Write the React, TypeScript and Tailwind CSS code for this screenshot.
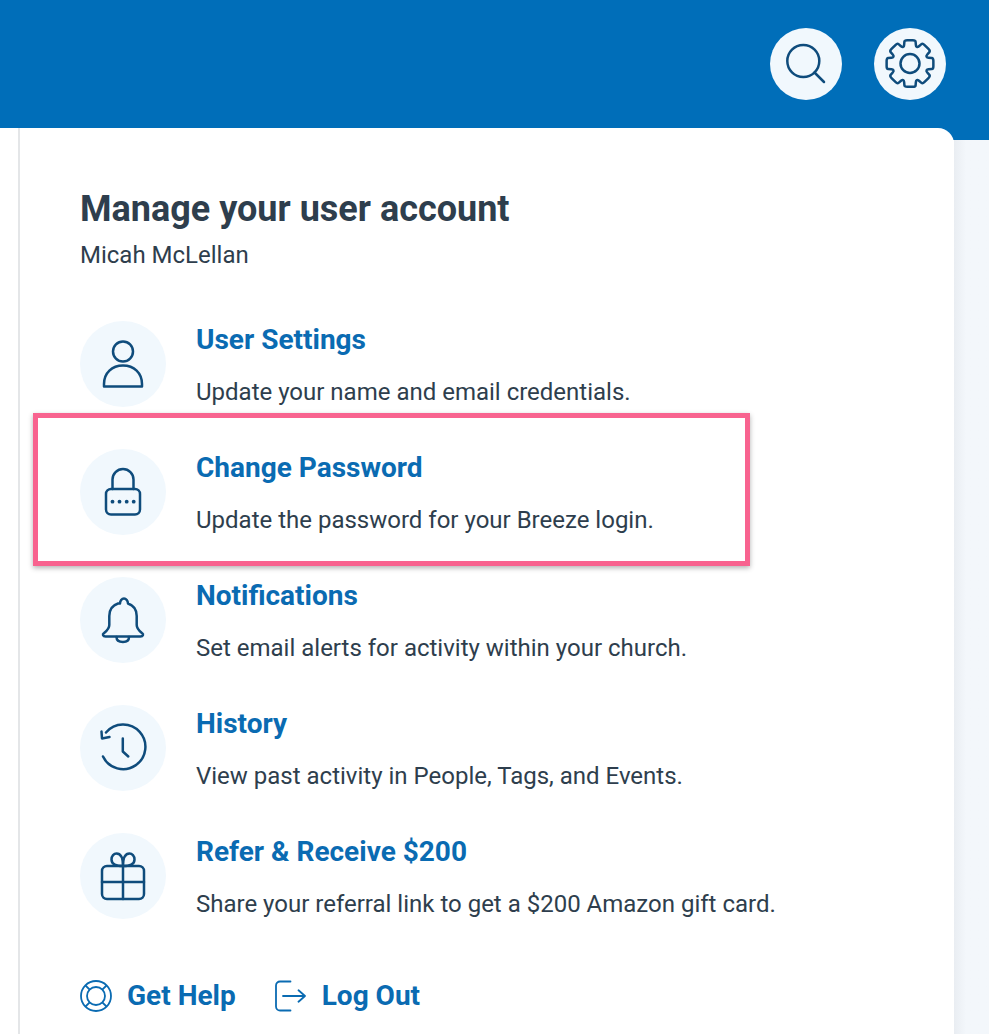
import type { ReactNode } from 'react'

// engrenagem de 8 dentes com cantos arredondados, centro em 36,35.5
function gearPath() {
  const pts: [number, number][] = []
  for (let i = 0; i < 8; i++) {
    const a = (i * Math.PI) / 4 - Math.PI / 2
    const p = (r: number, d: number): [number, number] => [36 + r * Math.cos(a + d), 35.5 + r * Math.sin(a + d)]
    pts.push(p(18, -0.34), p(24, -0.23), p(24, 0.23), p(18, 0.34))
  }
  const lerp = (a: [number, number], b: [number, number], t: number) =>
    `${(a[0] + (b[0] - a[0]) * t).toFixed(2)} ${(a[1] + (b[1] - a[1]) * t).toFixed(2)}`
  let d = ''
  pts.forEach((v, i) => {
    const prev = pts[(i + pts.length - 1) % pts.length]
    const next = pts[(i + 1) % pts.length]
    d += `${i === 0 ? 'M' : 'L'}${lerp(v, prev, 0.25)}Q${v[0].toFixed(2)} ${v[1].toFixed(2)} ${lerp(v, next, 0.25)}`
  })
  return d + 'Z'
}

const filas: { titulo: string; desc: string; icono: ReactNode }[] = [
  {
    titulo: 'User Settings',
    desc: 'Update your name and email credentials.',
    icono: (
      <>
        <circle cx="43" cy="30.500" r="10" />
        <path d="M24 65.500v-2.500C24 52 32 44.500 43 44.500S62 52 62 63v2.500z" />
      </>
    ),
  },
  {
    titulo: 'Change Password',
    desc: 'Update the password for your Breeze login.',
    icono: (
      <>
        <path d="M32.500 40V30.500a10.500 10.500 0 0 1 21 0V40" />
        <rect x="26" y="40" width="34" height="25.500" rx="5" />
        <circle cx="32.500" cy="52.700" r="1.900" fill="currentColor" stroke="none" />
        <circle cx="39.500" cy="52.700" r="1.900" fill="currentColor" stroke="none" />
        <circle cx="46.700" cy="52.700" r="1.900" fill="currentColor" stroke="none" />
        <circle cx="53.700" cy="52.700" r="1.900" fill="currentColor" stroke="none" />
      </>
    ),
  },
  {
    titulo: 'Notifications',
    desc: 'Set email alerts for activity within your church.',
    icono: (
      <>
        <path d="M38 26.500C32 28.500 29.300 33.500 29.300 39v9c0 4-2.800 6-5.300 8-2 1.500-1 3.500 1.500 3.500h35c2.500 0 3.500-2 1.500-3.500-2.500-2-5.300-4-5.300-8v-9c0-5.500-2.700-10.500-8.700-12.500 0-2.500-2-5-4-5-2.200 0-4 2.500-4 5z" />
        <path d="M36.500 60c0 3.500 2.700 5 6.500 5s6-1.500 6-5" />
      </>
    ),
  },
  {
    titulo: 'History',
    desc: 'View past activity in People, Tags, and Events.',
    icono: (
      <>
        <path d="M26 27.500A22.300 22.300 0 1 1 23 51.500" />
        <path d="M21.500 26.500l.5 7 7.500-1.500" />
        <path d="M42.800 33.500v13l5.500 5" />
      </>
    ),
  },
  {
    titulo: 'Refer & Receive $200',
    desc: 'Share your referral link to get a $200 Amazon gift card.',
    icono: (
      <>
        <rect x="22" y="33" width="42" height="33" rx="5" />
        <path d="M43 33v33M22 49h42" />
        <path d="M43 33c-6.500 0-11.500-2-11.500-6.500 0-3.500 2.500-6 5-6 4 0 6.500 4.500 6.500 12.500 0-8 2.500-12.500 6.500-12.500 2.500 0 5 2.500 5 6 0 4.500-5 6.500-11.500 6.500z" />
      </>
    ),
  },
]

export default function App() {
  return (
    <div className="h-[1034px] w-[989px] overflow-hidden bg-white font-['Roboto',sans-serif]">
      {/* BARRA SUPERIOR */}
      <div className="flex h-[140px] items-start justify-end gap-[32px] bg-[#006eb9] pr-[43px] pt-[28px]">
        <button className="h-[72px] w-[72px] rounded-full bg-[#f1f8fd] text-[#0f4c7c]">
          <svg viewBox="0 0 72 72" fill="none" stroke="currentColor" strokeWidth={2.500} strokeLinecap="round" className="h-[72px] w-[72px]">
            <circle cx="33.300" cy="33" r="16" />
            <path d="M44.500 44.500l9.500 9.500" />
          </svg>
        </button>
        <button className="h-[72px] w-[72px] rounded-full bg-[#f1f8fd] text-[#0f4c7c]">
          <svg viewBox="0 0 72 72" fill="none" stroke="currentColor" strokeWidth={2.500} strokeLinejoin="round" className="h-[72px] w-[72px]">
            <circle cx="36" cy="35.500" r="9.500" />
            <path d={gearPath()} />
          </svg>
        </button>
      </div>

      <div className="-mt-[12px] flex h-[906px]">
        <div className="w-[18px] bg-white" />

        {/* CARTÃO */}
        <div className="w-[936px] rounded-tr-[16px] border-l-2 border-[#e4e6e8] bg-white pl-[60px] pt-[59px]">
          <h1 className="text-[36px] font-bold leading-[44px] text-[#2e3e4d]">Manage your user account</h1>
          <p className="mt-[10px] text-[24px] leading-[28px] text-[#2e3e4d]">Micah McLellan</p>

          <div className="mt-[52px] flex flex-col gap-[42px]">
            {filas.map((f) => (
              <div key={f.titulo} className="flex h-[86px] items-start gap-[30px]">
                <div className="h-[86px] w-[86px] shrink-0 rounded-full bg-[#f1f8fd] text-[#0f4c7c]">
                  <svg viewBox="0 0 86 86" fill="none" stroke="currentColor" strokeWidth={2.500} strokeLinecap="round" strokeLinejoin="round" className="h-[86px] w-[86px]">
                    {f.icono}
                  </svg>
                </div>
                <div>
                  <div className="pt-px text-[28px] font-bold leading-[36px] text-[#0a6bb2]">{f.titulo}</div>
                  <div className="mt-[20px] text-[24px] leading-[28px] text-[#2e3e4d]">{f.desc}</div>
                </div>
              </div>
            ))}
          </div>

          <div className="mt-[59px] flex items-center gap-[38px]">
            <a className="flex items-center gap-[15px] text-[28px] font-bold leading-[36px] text-[#0a6bb2]">
              <svg viewBox="0 0 32 32" fill="none" stroke="currentColor" strokeWidth={1.800} className="h-[32px] w-[32px]">
                <circle cx="16" cy="16" r="15" />
                <circle cx="16" cy="16" r="9" />
                <path d="M5.500 5.500l4.200 4.200M26.500 5.500l-4.200 4.200M5.500 26.500l4.200-4.200M26.500 26.500l-4.200-4.200" />
              </svg>
              Get Help
            </a>
            <a className="flex items-center gap-[16px] text-[28px] font-bold leading-[36px] text-[#0a6bb2]">
              <svg viewBox="0 0 32 32" fill="none" stroke="currentColor" strokeWidth={1.800} strokeLinecap="round" strokeLinejoin="round" className="h-[32px] w-[32px]">
                <path d="M16.500 1.500H6a4 4 0 0 0-4 4v21a4 4 0 0 0 4 4h10.500" />
                <path d="M9 16h22M24.500 10.300L31 16l-6.500 5.700" />
              </svg>
              Log Out
            </a>
          </div>
        </div>

        {/* COLUNA DIREITA */}
        <div className="mt-[12px] flex-1 bg-[#f3f7fb] bg-gradient-to-r from-[#e9edf2] to-[#f3f7fb] to-[12px]" />
      </div>

      {/* MARCA ROSA */}
      <div className="absolute left-[33px] top-[413px] h-[153px] w-[717px] border-[5px] border-[#f8638f] shadow-[0_2px_5px_rgba(0,0,0,0.3)]" />
    </div>
  )
}
